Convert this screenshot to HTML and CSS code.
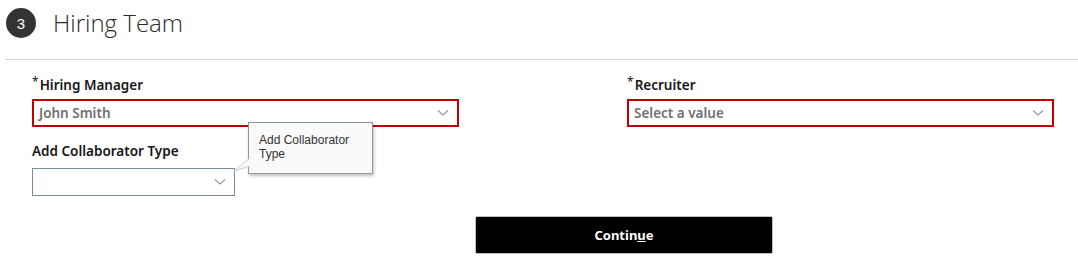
FILE: index.html
```html
<!DOCTYPE html>
<html>
<head>
<meta charset="utf-8">
<link rel="stylesheet" href="styles.css">
</head>
<body>
<div class="page">
  <div class="header">
    <div class="step">3</div>
    <h1 class="title">Hiring Team</h1>
  </div>
  <div class="rule"></div>
  <div class="form">
    <div class="field">
      <label class="label"><span class="req">*</span>Hiring Manager</label>
      <div class="select invalid"><span class="value">John Smith</span><svg class="chev" viewBox="0 0 12 8" width="12" height="8"><path d="M1 1.5 L6 6 L11 1.5" fill="none" stroke="#8d96a0" stroke-width="1.1"/></svg></div>
    </div>
    <div class="field">
      <label class="label"><span class="req">*</span>Recruiter</label>
      <div class="select invalid"><span class="value">Select a value</span><svg class="chev" viewBox="0 0 12 8" width="12" height="8"><path d="M1 1.5 L6 6 L11 1.5" fill="none" stroke="#8d96a0" stroke-width="1.1"/></svg></div>
    </div>
    <div class="field collab">
      <label class="label">Add Collaborator Type</label>
      <div class="select small"><span class="value"></span><svg class="chev" viewBox="0 0 12 8" width="12" height="8"><path d="M1 1.5 L6 6 L11 1.5" fill="none" stroke="#8d96a0" stroke-width="1.1"/></svg></div>
      <div class="tooltip">Add Collaborator<br>Type
        <svg class="tip-arrow" width="16" height="14" viewBox="0 0 16 14"><path d="M16 0 L0 13 L16 8" fill="#fafafa" stroke="#c6ccd2" stroke-width="1"/></svg>
      </div>
    </div>
  </div>
  <div class="actions">
    <button class="btn">Contin<u>u</u>e</button>
  </div>
</div>
</body>
</html>
```
FILE: styles.css
```css
html, body {
  margin: 0;
  padding: 0;
  background: #fff;
}
body {
  font-family: "Noto Sans", "Open Sans", sans-serif;
  color: #222;
}
.page {
  width: 1078px;
  height: 269px;
  overflow: hidden;
}
.header {
  display: flex;
  align-items: center;
  padding: 8px 0 0 6px;
  height: 30px;
}
.step {
  width: 30px;
  height: 30px;
  border-radius: 50%;
  background: #333;
  color: #fff;
  font-family: "Liberation Sans", Arial, sans-serif;
  font-size: 15px;
  display: flex;
  align-items: center;
  justify-content: center;
}
.title {
  margin: 0 0 0 17px;
  font-family: "Open Sans", sans-serif;
  font-weight: 300;
  font-size: 24px;
  color: #2a2a2a;
  line-height: 30px;
}
.rule {
  margin: 21px 0 0 6px;
  border-top: 1px solid #cfcfcf;
}
.form {
  display: grid;
  grid-template-columns: 427px 427px;
  column-gap: 168px;
  row-gap: 14px;
  padding: 12px 0 0 32px;
}
.field {
  display: flex;
  flex-direction: column;
  position: relative;
}
.label {
  font-size: 13.5px;
  font-weight: 600;
  color: #161616;
  height: 20px;
  line-height: 20px;
  margin-bottom: 7px;
}
.req {
  font-size: 12px;
  vertical-align: 4px;
  font-weight: 400;
  margin-right: 1px;
}
.select {
  box-sizing: border-box;
  height: 28px;
  display: flex;
  align-items: center;
  justify-content: space-between;
  padding: 0 8px 0 6px;
  background: #fff;
  border: 1px solid #7b8c99;
}
.select.invalid {
  border: 2px solid #c00000;
  padding-left: 5px;
}
.select.small {
  width: 203px;
}
.value {
  font-size: 13.5px;
  color: #707070;
  font-weight: 600;
}
.chev {
  display: block;
}
.tooltip {
  position: absolute;
  left: 216px;
  top: -19px;
  width: 103px;
  height: 40px;
  padding: 10px 10px 0 10px;
  background: #fafafa;
  border: 1px solid #8a9aa6;
  box-shadow: 1px 2px 3px rgba(0,0,0,0.25);
  font-family: "Liberation Sans", Arial, sans-serif;
  font-size: 12px;
  line-height: 14px;
  color: #333;
}
.tip-arrow {
  position: absolute;
  left: -15px;
  top: 35px;
}
.actions {
  padding: 20px 0 0 475px;
}
.btn {
  width: 298px;
  height: 38px;
  background: #000;
  color: #fff;
  border: 1px solid #b8c0c8;
  border-radius: 2px;
  font-family: "Noto Sans", "Open Sans", sans-serif;
  font-weight: 700;
  font-size: 13px;
  cursor: pointer;
}
```
